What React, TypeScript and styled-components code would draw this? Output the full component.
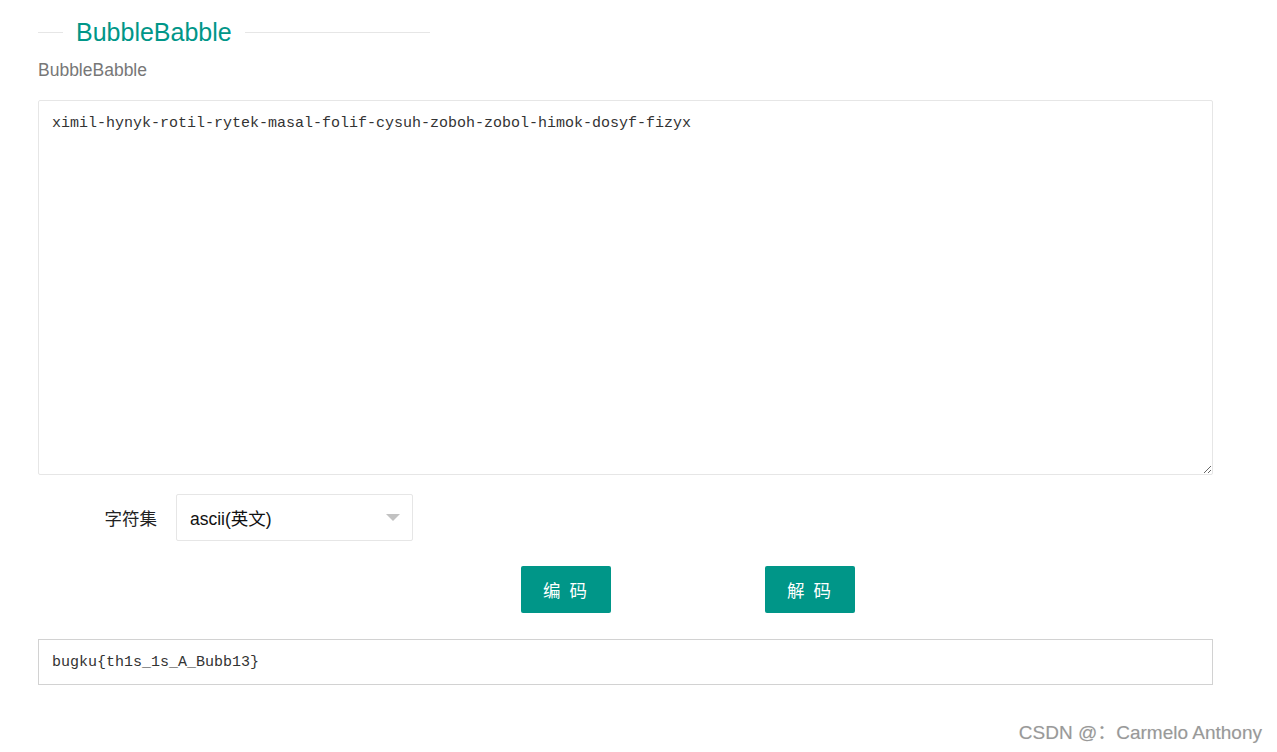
import React, { useState } from "react";
import styled, { createGlobalStyle } from "styled-components";

const GlobalStyle = createGlobalStyle`
  body {
    margin: 0;
    background: #fff;
    font-family: "Liberation Sans", "Noto Sans CJK SC", sans-serif;
  }
`;

const App = () => {
  const [input, setInput] = useState(
    "ximil-hynyk-rotil-rytek-masal-folif-cysuh-zoboh-zobol-himok-dosyf-fizyx"
  );
  return (
    <Page>
      <GlobalStyle />
      {/* fieldset title */}
      <Legend>
        <LegendLine style={{ width: 25, flex: "none" }} />
        <LegendTitle>BubbleBabble</LegendTitle>
        <LegendLine />
      </Legend>
      <SubLabel>BubbleBabble</SubLabel>

      <InputArea value={input} onChange={(e) => setInput(e.target.value)} />

      <FormRow>
        <FormLabel>字符集</FormLabel>
        <SelectBox>
          <span>ascii(英文)</span>
          <Caret />
        </SelectBox>
      </FormRow>

      <ButtonRow>
        <ActionBtn>编 码</ActionBtn>
        <ActionBtn>解 码</ActionBtn>
      </ButtonRow>

      <Output>bugku{"{"}th1s_1s_A_Bubb13{"}"}</Output>

      <Watermark>CSDN @：Carmelo Anthony</Watermark>
    </Page>
  );
};

const Page = styled.div`
  position: relative;
  min-height: 752px;
  box-sizing: border-box;
  padding: 20px 0 0 38px;
`;

const Legend = styled.div`
  display: flex;
  align-items: center;
  gap: 13px;
  width: 392px;
  height: 24px;
`;

const LegendLine = styled.div`
  flex: 1;
  height: 1px;
  background: #e6e6e6;
`;

const LegendTitle = styled.div`
  font-size: 25px;
  line-height: 24px;
  color: #009688;
`;

const SubLabel = styled.div`
  margin-top: 16px;
  font-size: 17.5px;
  line-height: 20px;
  color: #777;
`;

const InputArea = styled.textarea`
  display: block;
  margin-top: 20px;
  width: 1175px;
  height: 375px;
  box-sizing: border-box;
  padding: 13px 13px;
  border: 1px solid #e6e6e6;
  border-radius: 2px;
  outline: none;
  font-family: "Liberation Mono", monospace;
  font-size: 15px;
  line-height: 20px;
  color: #333;
`;

const FormRow = styled.div`
  display: flex;
  align-items: center;
  margin-top: 19px;
`;

const FormLabel = styled.label`
  width: 138px;
  box-sizing: border-box;
  padding-right: 19px;
  text-align: right;
  font-size: 17.5px;
  color: #222;
`;

const SelectBox = styled.div`
  position: relative;
  display: flex;
  align-items: center;
  width: 237px;
  height: 47px;
  box-sizing: border-box;
  padding-left: 13px;
  border: 1px solid #e6e6e6;
  border-radius: 2px;
  font-size: 17.5px;
  color: #111;
`;

const Caret = styled.i`
  position: absolute;
  right: 12px;
  top: 19px;
  width: 0;
  height: 0;
  border-left: 7px solid transparent;
  border-right: 7px solid transparent;
  border-top: 7px solid #c2c2c2;
`;

const ButtonRow = styled.div`
  display: flex;
  gap: 154px;
  margin-top: 25px;
  padding-left: 483px;
`;

const ActionBtn = styled.button`
  width: 90px;
  height: 47px;
  border: none;
  border-radius: 2px;
  background: #009688;
  color: #fff;
  font-family: "Liberation Sans", "Noto Sans CJK SC", sans-serif;
  font-size: 17.5px;
  letter-spacing: 2px;
  cursor: pointer;
`;

const Output = styled.div`
  display: flex;
  align-items: center;
  margin-top: 26px;
  width: 1175px;
  height: 46px;
  box-sizing: border-box;
  padding-left: 13px;
  border: 1px solid #d2d2d2;
  font-family: "Liberation Mono", monospace;
  font-size: 15px;
  color: #333;
`;

const Watermark = styled.div`
  position: absolute;
  right: 15px;
  bottom: 8px;
  font-size: 19px;
  color: #999;
  text-shadow: 0 0 1px #ddd;
`;

export default App;
